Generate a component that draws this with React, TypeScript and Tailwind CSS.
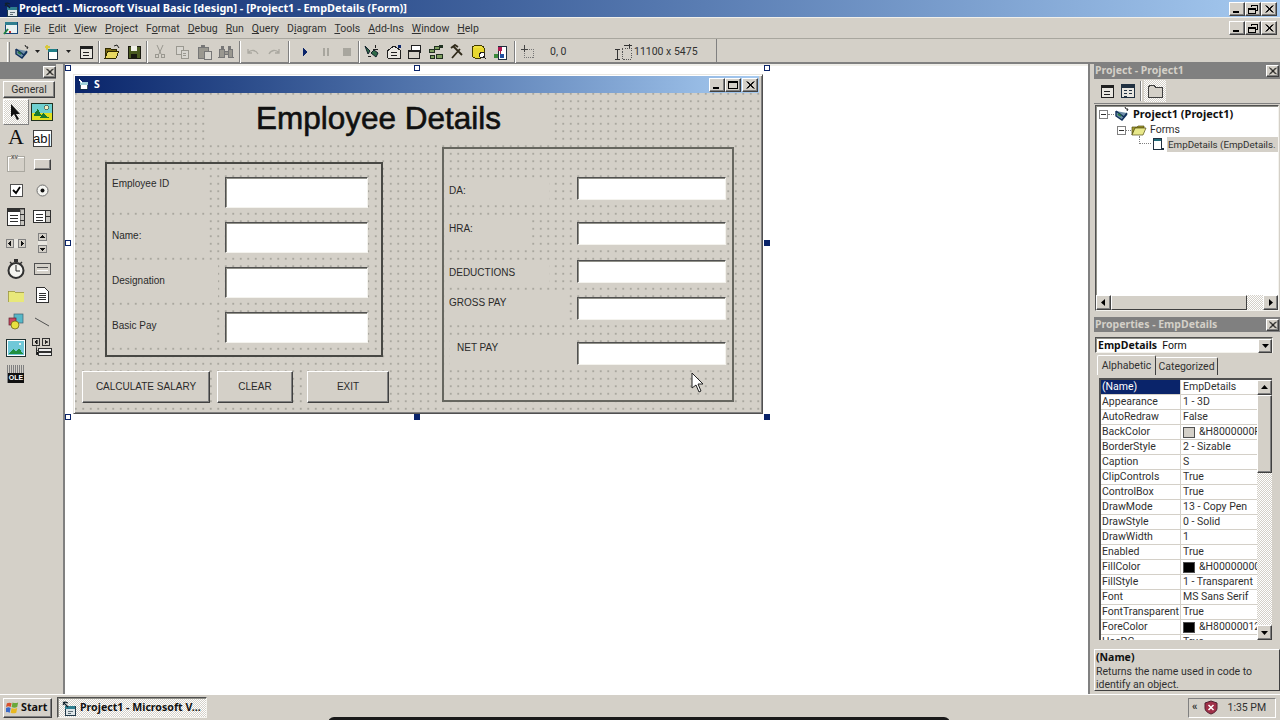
import React from "react";

const FONT = "font-['Roboto','Liberation_Sans',sans-serif]";
const BOLD = "font-['Noto_Sans','Liberation_Sans',sans-serif] font-bold";
const raised = "border border-t-white border-l-white border-r-[#404040] border-b-[#404040] shadow-[inset_-1px_-1px_0_#808080]";
const sunken = "border border-t-[#505050] border-l-[#505050] border-r-[#f4f3ee] border-b-[#f4f3ee] shadow-[inset_1px_1px_0_#909088]";
const dots = "bg-[#d4d0c8] bg-[radial-gradient(circle,#77776f_0.5px,transparent_0.8px)] bg-size-[7.5px_7.5px] bg-position-[-3px_-3px]";
const dither = "bg-[#d4d0c8] bg-[repeating-conic-gradient(#d4d0c8_0_25%,#ffffff_0_50%)] bg-size-[2px_2px]";

type P = { children: React.ReactNode; s?: number; c?: string };
const I = ({ children, s = 16, c = "" }: P) => (
  <svg width={s} height={s} viewBox="0 0 16 16" className={c} fill="none" shapeRendering="crispEdges">{children}</svg>
);

/* ---------- window buttons ---------- */
const Glyph = ({ k }: { k: string }) => (
  <svg width="12" height="10" viewBox="0 0 12 10" stroke="#000" fill="none" shapeRendering="crispEdges">
    {k === "min" && <rect x="2" y="7" width="6" height="2" fill="#000" stroke="none" />}
    {k === "max" && <path d="M1.500 1.500h9v7h-9zM1.500 2.500h9" />}
    {k === "res" && <path d="M4.500 2.500v-1h6v5h-2M1.500 4.500h7v5h-7zM1.500 5h7M4.500 1h6" />}
    {k === "x" && <path d="M2.500 1.500l7 7M3.500 1.500l7 7M9.500 1.500l-7 7M10.500 1.500l-7 7" shapeRendering="auto" strokeWidth="0.9" />}
  </svg>
);
const WinBtn = ({ k, c = "w-4 h-3.5" }: { k: string; c?: string }) => (
  <div className={`${c} bg-[#d4d0c8] ${raised} flex items-center justify-center`}><Glyph k={k} /></div>
);
const CloseBox = () => (
  <div className={`w-[13px] h-3 bg-[#d4d0c8] ${raised} flex items-center justify-center overflow-hidden`}><Glyph k="x" /></div>
);

/* ---------- app icons ---------- */
const VbIcon = () => (
  <I>
    <rect x="4" y="6" width="10" height="9" fill="#dfe6e8" stroke="#203848" />
    <rect x="4" y="6" width="10" height="3" fill="#2f7f90" />
    <path d="M2 2l5 5M2 5l2-3 3 1" stroke="#10202a" strokeWidth="1.300" shapeRendering="auto" />
    <path d="M7 11h5M7 13h3" stroke="#607078" />
  </I>
);
const MenuIcon = () => (
  <I>
    <rect x="2" y="2" width="12" height="11" fill="#eaf2f2" stroke="#184878" />
    <rect x="2" y="2" width="12" height="3" fill="#2f7f90" />
    <path d="M1 14l4-5" stroke="#208040" strokeWidth="2" shapeRendering="auto" />
    <circle cx="7" cy="12" r="1.500" fill="#c03030" />
  </I>
);
const ProjIcon = () => (
  <I>
    <path d="M2 5l8 6 3-4M2 5v5l6 4 5-6" stroke="#10305a" strokeWidth="1.400" fill="#6f8fa8" shapeRendering="auto" />
    <path d="M11 1l1 2 2 0-1 2" stroke="#202020" shapeRendering="auto" />
    <path d="M4 8l3 2" stroke="#2a7a40" strokeWidth="2" shapeRendering="auto" />
  </I>
);
const FormIcon = () => (
  <I>
    <rect x="4" y="5" width="9" height="10" fill="#fff" stroke="#203040" />
    <rect x="4" y="5" width="9" height="3" fill="#1f7f88" />
    <path d="M3 1v5M1 3h5" stroke="#d8c840" strokeWidth="1.500" />
  </I>
);
const MenuEd = () => (
  <I>
    <rect x="2" y="2" width="12" height="12" fill="#e8e6e0" stroke="#202020" />
    <rect x="2" y="2" width="12" height="3" fill="#202020" />
    <path d="M5 8h6M5 11h6" stroke="#202020" />
  </I>
);
const OpenIco = () => (
  <I>
    <path d="M1 4h5l1 1h5v2H4L1 14z" fill="#7a6a10" stroke="#302a00" />
    <path d="M1 14l3-7h11l-3 7z" fill="#e8d860" stroke="#302a00" />
    <path d="M10 2l3-1 2 3" stroke="#202020" shapeRendering="auto" />
  </I>
);
const SaveIco = () => (
  <I>
    <rect x="2" y="2" width="12" height="12" fill="#4a5a20" stroke="#1a1a10" />
    <rect x="5" y="2" width="6" height="5" fill="#f0f0e8" />
    <rect x="5" y="10" width="6" height="4" fill="#181810" />
  </I>
);
const g = "#9a9890";
const CutIco = () => <I><path d="M5 1l4 9M11 1L7 10" stroke={g} shapeRendering="auto" /><circle cx="5" cy="12" r="2" stroke={g} /><circle cx="11" cy="12" r="2" stroke={g} /></I>;
const CopyIco = () => <I><rect x="2" y="2" width="7" height="8" fill="#d8d6d0" stroke={g} /><rect x="7" y="6" width="7" height="8" fill="#d8d6d0" stroke={g} /><path d="M9 9h3M9 11h3" stroke={g} /></I>;
const PasteIco = () => <I><rect x="2" y="3" width="10" height="11" fill={g} stroke="#777" /><rect x="5" y="1" width="4" height="3" fill="#777" /><rect x="8" y="7" width="7" height="8" fill="#d8d6d0" stroke="#777" /></I>;
const FindIco = () => <I><path d="M2 5h4v8H1zM10 5h4l1 8h-5zM6 7h4v3H6z" fill={g} stroke="#777" /><rect x="3" y="2" width="3" height="3" fill="#777" /><rect x="10" y="2" width="3" height="3" fill="#777" /></I>;
const UndoIco = () => <I><path d="M3 5v4h4M3 9c3-4 8-3 10 1" stroke="#aaa8a0" strokeWidth="1.300" shapeRendering="auto" /></I>;
const RedoIco = () => <I><path d="M13 5v4H9M13 9C10 5 5 6 3 10" stroke="#aaa8a0" strokeWidth="1.300" shapeRendering="auto" /></I>;
const RunIco = () => <I><path d="M6 4l5 4-5 4z" fill="#0a246a" /></I>;
const PauseIco = () => <I><path d="M5 4h2v8H5zM9 4h2v8H9z" fill="#a8a69e" /></I>;
const StopIco = () => <I><rect x="4" y="4" width="8" height="8" fill="#a8a69e" /></I>;
const PExpIco = () => <I><path d="M1 2l5 5-2 3zM7 9l5 4 2-4-4-3z" fill="#2f6a48" stroke="#10202a" shapeRendering="auto" /><path d="M11 1v3M9 5h5M4 12h3" stroke="#202020" /></I>;
const PropIco = () => <I><path d="M1 7l7-5 6 4v8H2z" fill="#e8e6e0" stroke="#202020" /><path d="M5 8h6M5 11h6" stroke="#202020" /><rect x="12" y="1" width="3" height="3" fill="#0a246a" /></I>;
const LayoutIco = () => <I><rect x="4" y="1" width="9" height="7" fill="#fff" stroke="#202020" /><rect x="1" y="6" width="11" height="8" fill="#d4d0c8" stroke="#202020" /><rect x="1" y="6" width="11" height="2" fill="#202020" /></I>;
const ObjIco = () => <I><path d="M1 5h5v3H1zM6 2h5v3H6zM8 10h6v4H8zM2 11h4v3H2z" fill="#7fa060" stroke="#203020" /><rect x="11" y="1" width="4" height="3" fill="#203020" /></I>;
const ToolIco = () => <I><path d="M3 14l8-9M4 2l9 9M2 4l4-3 3 2" stroke="#302a1a" strokeWidth="1.800" shapeRendering="auto" /></I>;
const DataIco = () => <I><ellipse cx="7" cy="4" rx="6" ry="2.500" fill="#f0e040" stroke="#403a00" /><path d="M1 4v8c1 3 11 3 12 0V4" fill="#e8d830" stroke="#403a00" /><circle cx="11" cy="11" r="2.500" fill="#fff" stroke="#202020" /><path d="M13 13l2 2" stroke="#202020" /></I>;
const VcmIco = () => <I><rect x="6" y="2" width="8" height="13" fill="#fff" stroke="#203040" /><circle cx="8" cy="5" r="2.400" fill="#b01850" /><path d="M8 7v3" stroke="#a02040" /><circle cx="4" cy="12" r="2.200" fill="#3a8a3a" /><circle cx="10" cy="12" r="2.200" fill="#2050a0" /></I>;
const PosIco = () => <I><path d="M4.500 5.500h9v8h-9z" stroke="#777" strokeDasharray="1 1" /><path d="M4 1v7M1 5h7" stroke="#444" /></I>;
const SizeIco = () => <I s={18}><path d="M6.500 4.500h8v10h-8z" stroke="#555" strokeDasharray="1 1" /><path d="M8 2.500h7M13 1v3M2 6v9M0 6h4M0 15h4" stroke="#333" /></I>;

const Drop = () => <svg width="5" height="3" viewBox="0 0 5 3"><path d="M0 0h5L2.500 3z" fill="#202020" /></svg>;
const Sep = ({ w }: { w: number }) => (
  <div style={{ width: w }} className="h-[22px] flex justify-center shrink-0">
    <div className="w-[2px] h-[22px] border-l border-l-[#808080] border-r border-r-white" />
  </div>
);
const TB = ({ w = 22, children }: { w?: number; children: React.ReactNode }) => (
  <div style={{ width: w }} className="h-[22px] flex items-center justify-center shrink-0">{children}</div>
);

const menus: [string, string, string][] = [
  ["", "F", "ile"], ["", "E", "dit"], ["", "V", "iew"], ["", "P", "roject"], ["F", "o", "rmat"], ["", "D", "ebug"],
  ["", "R", "un"], ["", "Q", "uery"], ["D", "i", "agram"], ["", "T", "ools"], ["", "A", "dd-Ins"], ["", "W", "indow"], ["", "H", "elp"],
];

/* ---------- toolbox icons ---------- */
const PictureBox = ({ s = 22 }: { s?: number }) => (
  <svg width={s} height={s - 4} viewBox="0 0 20 16" shapeRendering="crispEdges">
    <rect x="0.5" y="0.5" width="19" height="15" fill="#6fd0d0" stroke="#203020" />
    <rect x="1" y="9" width="18" height="6" fill="#e0e020" />
    <path d="M2 12l4-7 4 7zM8 13l3-4 5 4z" fill="#1a7a30" />
    <circle cx="14" cy="4" r="2" fill="#f0f0c0" stroke="#202020" strokeWidth="0.5" />
  </svg>
);
const tools: React.ReactNode[] = [
  <svg width="14" height="18" viewBox="0 0 14 18"><path d="M2 1v13l3-3 3 6 2-1-3-5h4z" fill="#101010" /></svg>,
  <PictureBox />,
  <span className="font-['Liberation_Serif',serif] text-[22px] leading-none text-[#101010] -mt-[2px]">A</span>,
  <div className="w-[19px] h-[17px] bg-white border border-[#404040] flex items-center justify-center text-[13px] leading-none text-[#101010] font-['Liberation_Sans',sans-serif]">ab|</div>,
  <div className="w-[18px] h-[16px] border border-[#aaa8a0] shadow-[inset_1px_1px_0_#fff] relative"><span className="absolute -top-[3px] left-[3px] text-[7px] leading-none bg-[#d4d0c8] text-[#444]">xv</span></div>,
  <div className={`w-[17px] h-[11px] bg-[#d4d0c8] ${raised}`} />,
  <svg width="13" height="13" viewBox="0 0 13 13"><rect x="0.5" y="0.5" width="12" height="12" fill="#fff" stroke="#505050" /><path d="M3 6l3 3 4-6" stroke="#000" strokeWidth="1.800" fill="none" /></svg>,
  <svg width="13" height="13" viewBox="0 0 13 13"><circle cx="6.500" cy="6.500" r="5.500" fill="#f4f4f0" stroke="#707070" /><circle cx="6.500" cy="6.500" r="2" fill="#101010" /></svg>,
  <svg width="18" height="18" viewBox="0 0 18 18" shapeRendering="crispEdges"><rect x="0.5" y="0.5" width="17" height="17" fill="#fff" stroke="#303030" /><rect x="1" y="1" width="12" height="3" fill="#303030" /><rect x="13" y="1" width="4" height="16" fill="#c8c6c0" stroke="#303030" strokeWidth="0.5" /><path d="M3 7h8M3 10h8M3 13h8M13 6h4M13 12h4" stroke="#303030" /></svg>,
  <svg width="18" height="13" viewBox="0 0 18 13" shapeRendering="crispEdges"><rect x="0.5" y="0.5" width="17" height="12" fill="#fff" stroke="#303030" /><rect x="12" y="1" width="5" height="11" fill="#c8c6c0" /><path d="M3 4h7M3 7h7M3 10h7M12 6h5M12 .5v12" stroke="#303030" /></svg>,
  <svg width="20" height="9" viewBox="0 0 20 9" shapeRendering="crispEdges"><rect width="20" height="9" fill="#e8e6e0" /><rect x="0.5" y="0.5" width="7" height="8" fill="#d4d0c8" stroke="#808080" /><rect x="12.5" y="0.5" width="7" height="8" fill="#d4d0c8" stroke="#808080" /><path d="M5 2v5L2 4.500zM15 2v5l3-2.500z" fill="#101010" /></svg>,
  <svg width="9" height="20" viewBox="0 0 9 20" shapeRendering="crispEdges"><rect width="9" height="20" fill="#e8e6e0" /><rect x="0.5" y="0.5" width="8" height="7" fill="#d4d0c8" stroke="#808080" /><rect x="0.5" y="12.5" width="8" height="7" fill="#d4d0c8" stroke="#808080" /><path d="M2 5h5L4.500 2zM2 15h5l-2.500 3z" fill="#101010" /></svg>,
  <svg width="18" height="20" viewBox="0 0 18 20"><rect x="7" y="0" width="4" height="3" fill="#303030" /><path d="M3 3l2 2M15 3l-2 2" stroke="#303030" strokeWidth="1.500" /><circle cx="9" cy="11.500" r="7.500" fill="#f4f4f0" stroke="#303030" strokeWidth="2" /><path d="M9 6v6h4" stroke="#202020" fill="none" /></svg>,
  <svg width="17" height="12" viewBox="0 0 17 12" shapeRendering="crispEdges"><rect x="0.5" y="0.5" width="16" height="11" fill="#d4d0c8" stroke="#505050" /><path d="M3 4h11" stroke="#505050" /><rect x="3" y="7" width="11" height="1" fill="#fff" /></svg>,
  <svg width="16" height="13" viewBox="0 0 16 13" shapeRendering="crispEdges"><path d="M0 2h6l1 1h9v10H0z" fill="#e8e87a" stroke="#908a40" strokeWidth="0.7" /></svg>,
  <svg width="13" height="16" viewBox="0 0 13 16" shapeRendering="crispEdges"><path d="M.5.5h8l4 4v11H.5z" fill="#fff" stroke="#303030" /><path d="M3 6h7M3 8h7M3 10h7M3 12h7" stroke="#303030" /></svg>,
  <svg width="17" height="17" viewBox="0 0 17 17"><rect x="6" y="1" width="9" height="9" fill="#55b8c8" stroke="#406070" strokeWidth="0.7" /><rect x="1" y="5" width="7" height="7" fill="#c84860" stroke="#602030" strokeWidth="0.7" /><circle cx="7" cy="12" r="4" fill="#e8e040" stroke="#605810" strokeWidth="0.7" /></svg>,
  <svg width="16" height="10" viewBox="0 0 16 10"><path d="M1 1l14 8" stroke="#505050" /></svg>,
  <svg width="20" height="18" viewBox="0 0 20 18" shapeRendering="crispEdges"><rect x="0.5" y="0.5" width="19" height="17" fill="#fff" stroke="#203030" strokeWidth="1.500" /><rect x="2" y="2" width="16" height="14" fill="#70c8d8" /><path d="M3 15l4-5 3 3 3-4 4 6z" fill="#209040" /><circle cx="14" cy="5" r="1.600" fill="#e8f0f0" /></svg>,
  <svg width="20" height="19" viewBox="0 0 20 19" shapeRendering="crispEdges"><rect x="0.5" y="0.5" width="7" height="7" fill="#d4d0c8" stroke="#303030" /><rect x="10.5" y="0.5" width="7" height="7" fill="#d4d0c8" stroke="#303030" /><path d="M5 2v4L2.500 4zM13 2v4l2.500-2zM4 7.500v9h2M4 12.500h2" fill="#101010" stroke="#303030" strokeWidth="0.7" /><rect x="6.500" y="10.500" width="13" height="3" fill="#eee" stroke="#303030" /><rect x="6.500" y="14.500" width="13" height="3" fill="#eee" stroke="#303030" /></svg>,
  <div className="relative w-[18px] h-[18px] bg-[repeating-linear-gradient(90deg,#808080_0_1px,transparent_1px_2px)]"><span className="absolute left-[1px] bottom-0 w-[16px] h-[10px] bg-[#101010] text-white font-bold text-[7px] leading-[10px] text-center font-['Liberation_Sans',sans-serif]">OLE</span></div>,
];

/* ---------- form controls ---------- */
const TextBox = ({ c }: { c: string }) => <div className={`absolute bg-white ${sunken} ${c}`} />;
const Lbl = ({ c, children }: { c: string; children: React.ReactNode }) => (
  <div className={`absolute bg-[#d4d0c8] text-[10px] leading-[13px] text-[#2a2a2a] font-['Liberation_Sans',sans-serif] whitespace-nowrap ${c}`}>{children}</div>
);
const Btn = ({ c, children }: { c: string; children: React.ReactNode }) => (
  <div className={`absolute bg-[#d4d0c8] ${raised} flex items-center justify-center pb-[1px] text-[10px] text-[#2a2a2a] font-['Liberation_Sans',sans-serif] ${c}`}>{children}</div>
);
const Handle = ({ c, on }: { c: string; on?: boolean }) => (
  <div className={`absolute w-[6px] h-[6px] border border-[#0a246a] ${on ? "bg-[#0a246a]" : "bg-white"} ${c}`} />
);

const props: [string, string, string?][] = [
  ["Appearance", "1 - 3D"], ["AutoRedraw", "False"], ["BackColor", "&H8000000F&", "#d4d0c8"], ["BorderStyle", "2 - Sizable"],
  ["Caption", "S"], ["ClipControls", "True"], ["ControlBox", "True"], ["DrawMode", "13 - Copy Pen"], ["DrawStyle", "0 - Solid"],
  ["DrawWidth", "1"], ["Enabled", "True"], ["FillColor", "&H00000000&", "#000"], ["FillStyle", "1 - Transparent"], ["Font", "MS Sans Serif"],
  ["FontTransparent", "True"], ["ForeColor", "&H80000012&", "#000"], ["HasDC", "True"],
];

const Arrow = ({ d }: { d: "u" | "d" | "l" | "r" }) => (
  <svg width="7" height="7" viewBox="0 0 7 7">
    <path d={d === "u" ? "M0 5h7L3.500 1z" : d === "d" ? "M0 2h7L3.500 6z" : d === "l" ? "M5 0v7L1 3.500z" : "M2 0v7l4-3.500z"} fill="#000" />
  </svg>
);
const ScrollBtn = ({ d, c = "w-[15px] h-[15px]" }: { d: "u" | "d" | "l" | "r"; c?: string }) => (
  <div className={`${c} bg-[#d4d0c8] ${raised} flex items-center justify-center shrink-0`}><Arrow d={d} /></div>
);

export default function App() {
  return (
    <div className={`relative w-[1280px] h-[720px] overflow-hidden bg-[#d4d0c8] flex flex-col text-[#101010] text-[10.5px] ${FONT}`}>
      {/* Title bar */}
      <div className="h-[18px] shrink-0 bg-linear-to-r from-[#0a246a] to-[#a6caf0] flex items-center pl-[3px] pr-[3px] border-b border-b-[#f0efea]">
        <VbIcon />
        <div className={`text-white text-[10.9px] whitespace-nowrap flex-1 ${BOLD}`}>Project1 - Microsoft Visual Basic [design] - [Project1 - EmpDetails (Form)]</div>
        <WinBtn k="min" /><WinBtn k="res" /><WinBtn k="x" />
      </div>
      {/* Menu bar */}
      <div className="h-[20px] shrink-0 flex items-center pl-[3px] pr-[3px]">
        <div className="w-4 h-4 mr-[5px]"><MenuIcon /></div>
        <div className="flex-1 flex gap-[8px] pt-[2px] text-[#303030] text-[10.5px]">
          {menus.map(([a, b, c]) => <span key={b + c} className="whitespace-nowrap">{a}<span className="underline">{b}</span>{c}</span>)}
        </div>
        <WinBtn k="min" /><WinBtn k="res" /><WinBtn k="x" />
      </div>
      {/* Toolbar */}
      <div className="h-[26px] shrink-0 border-t border-t-[#a8a69e] border-b-2 border-b-[#808080] flex">
        <div className="w-[717px] shrink-0 flex items-center pl-[7px] pt-[2px] border-r border-r-[#808080]">
          <div className="w-[3px] h-[20px] border-l border-l-white border-r border-r-[#808080] mr-[3px]" />
          <TB w={18}><ProjIcon /></TB><TB w={12}><Drop /></TB><TB w={18}><FormIcon /></TB><TB w={14}><Drop /></TB>
          <TB><MenuEd /></TB><Sep w={4} />
          <TB><OpenIco /></TB><TB><SaveIco /></TB><Sep w={4} />
          <TB><CutIco /></TB><TB><CopyIco /></TB><TB><PasteIco /></TB><TB><FindIco /></TB><Sep w={5} />
          <TB w={21}><UndoIco /></TB><TB w={21}><RedoIco /></TB><Sep w={10} />
          <TB w={21}><RunIco /></TB><TB><PauseIco /></TB><TB w={20}><StopIco /></TB><Sep w={4} />
          <TB><PExpIco /></TB><TB w={21}><PropIco /></TB><TB><LayoutIco /></TB><TB w={20}><ObjIco /></TB><TB><ToolIco /></TB><TB w={21}><DataIco /></TB><TB><VcmIco /></TB>
          <Sep w={8} />
          <TB w={18}><PosIco /></TB>
          <span className="ml-[13px] w-[64px] text-[#303030]">0, 0</span>
          <TB w={20}><SizeIco /></TB>
          <span className="text-[#303030] whitespace-nowrap">11100 x 5475</span>
        </div>
      </div>

      {/* Body */}
      <div className="flex-1 min-h-0 flex">
        {/* Toolbox */}
        <div className="w-[65px] shrink-0 border-r-2 border-r-[#808080] flex flex-col pl-[2px]">
          <div className="h-[15px] w-[54px] -ml-[2px] pl-[2px] bg-[#808080] flex items-center justify-end box-content"><CloseBox /></div>
          <div className={`mt-[2px] ml-[1px] w-[52px] h-[17px] bg-[#d4d0c8] ${raised} flex items-center justify-center text-[#303030] text-[10.5px]`}>General</div>
          <div className="mt-[1px] ml-[1px] grid grid-cols-[26px_26px] auto-rows-[26.2px] place-items-center">
            {tools.map((t, i) => (
              <div key={i} className={`w-[26px] h-[26px] flex items-center justify-center ${i === 0 ? `${dither} border border-t-white border-l-white border-r-[#808080] border-b-[#808080]` : ""}`}>{t}</div>
            ))}
          </div>
        </div>

        {/* MDI design area */}
        <div className="relative w-[1023px] shrink-0 bg-white border-t-2 border-t-[#f0efea]">
          <div className="absolute left-[8px] top-[8px] w-[690px] h-[340px] bg-[#d4d0c8] border border-t-[#e8e6e0] border-l-[#e8e6e0] border-r-[#505050] border-b-[#505050] shadow-[inset_1px_1px_0_#fff,inset_-1px_-1px_0_#808080]">
            {/* caption */}
            <div className="absolute left-[1px] right-[3px] top-[1px] h-[17px] bg-linear-to-r from-[#0a246a] to-[#a6caf0] flex items-center pl-[3px] pr-[1px]">
              <I s={13}><rect x="3" y="5" width="9" height="9" fill="#fff" stroke="#103040" /><rect x="3" y="5" width="9" height="3" fill="#9fd0d8" /><path d="M1 2l4 3" stroke="#fff" strokeWidth="2" /></I>
              <span className={`ml-[3px] text-white text-[10.5px] flex-1 ${BOLD}`}>S</span>
              <WinBtn k="min" c="w-[16px] h-[14px]" /><WinBtn k="max" c="w-[16px] h-[14px] mr-[1px]" /><WinBtn k="x" c="w-[16px] h-[14px]" />
            </div>
            {/* client */}
            <div className={`absolute left-[1px] right-[1px] top-[18px] bottom-[1px] ${dots}`}>
              {/* heading */}
              <div className="absolute left-[130px] top-[4px] w-[348px] h-[48px] bg-[#d4d0c8] flex items-center pl-[51px] pb-[4px] text-[31.5px] leading-none text-[#101010] [-webkit-text-stroke:0.6px_#101010] font-['Liberation_Sans',sans-serif] whitespace-nowrap">Employee Details</div>

              {/* left frame */}
              <div className="absolute left-[30px] top-[69px] w-[278px] h-[195px] border-2 border-[#484844]" />
              <Lbl c="left-[35px] top-[81px] w-[98px] h-[36px] pl-[2px] pt-[3px]">Employee ID</Lbl>
              <TextBox c="left-[150px] top-[84px] w-[143px] h-[31px]" />
              <Lbl c="left-[35px] top-[127px] w-[98px] h-[35px] pl-[2px] pt-[9px]">Name:</Lbl>
              <TextBox c="left-[150px] top-[129px] w-[143px] h-[31px]" />
              <Lbl c="left-[35px] top-[172px] w-[108px] h-[35px] pl-[2px] pt-[9px]">Designation</Lbl>
              <TextBox c="left-[150px] top-[174px] w-[143px] h-[31px]" />
              <Lbl c="left-[35px] top-[217px] w-[106px] h-[35px] pl-[2px] pt-[9px]">Basic Pay</Lbl>
              <TextBox c="left-[150px] top-[219px] w-[143px] h-[31px]" />

              {/* buttons */}
              <Btn c="left-[7px] top-[278px] w-[128px] h-[32px]">CALCULATE SALARY</Btn>
              <Btn c="left-[142px] top-[278px] w-[76px] h-[32px]">CLEAR</Btn>
              <Btn c="left-[232px] top-[278px] w-[82px] h-[32px]">EXIT</Btn>

              {/* right frame */}
              <div className="absolute left-[367px] top-[54px] w-[292px] h-[255px] border-2 border-[#66665f]" />
              <Lbl c="left-[372px] top-[87px] w-[102px] h-[20px] pl-[2px] pt-[4px]">DA:</Lbl>
              <TextBox c="left-[502px] top-[84px] w-[149px] h-[23px]" />
              <Lbl c="left-[372px] top-[126px] w-[85px] h-[26px] pl-[2px] pt-[3px]">HRA:</Lbl>
              <TextBox c="left-[502px] top-[129px] w-[149px] h-[23px]" />
              <Lbl c="left-[372px] top-[171px] w-[102px] h-[20px] pl-[2px] pt-[2px]">DEDUCTIONS</Lbl>
              <TextBox c="left-[502px] top-[167px] w-[149px] h-[23px]" />
              <Lbl c="left-[372px] top-[200px] w-[118px] h-[29px] pl-[2px] pt-[3px]">GROSS PAY</Lbl>
              <TextBox c="left-[502px] top-[204px] w-[149px] h-[23px]" />
              <Lbl c="left-[375px] top-[246px] w-[122px] h-[27px] pl-[7px] pt-[2px]">NET PAY</Lbl>
              <TextBox c="left-[502px] top-[249px] w-[149px] h-[23px]" />
            </div>
          </div>
          {/* handles */}
          <Handle c="left-0 -top-[1px]" /><Handle c="left-[349px] -top-[1px]" /><Handle c="left-[699px] -top-[1px]" />
          <Handle c="left-0 top-[174px]" /><Handle c="left-[699px] top-[174px]" on />
          <Handle c="left-0 top-[348px]" /><Handle c="left-[349px] top-[348px]" on /><Handle c="left-[699px] top-[348px]" on />
        </div>

        {/* Right docks */}
        <div className="flex-1 min-w-0 flex flex-col pl-[4px] border-l-2 border-l-[#808080]">
          {/* Project */}
          <div className="h-[15px] pb-[1px] bg-[#808080] flex items-center justify-between pl-[1px] pr-[1px]">
            <span className={`text-[#d4d0c8] text-[10.5px] whitespace-nowrap ${BOLD}`}>Project - Project1</span><CloseBox />
          </div>
          <div className="h-[25px] flex items-center pl-[2px] border-b border-b-[#808080]">
            <TB w={21}><MenuEd /></TB><TB w={21}><svg width="14" height="14" viewBox="0 0 14 14" shapeRendering="crispEdges"><rect x="0.5" y="0.5" width="13" height="13" fill="#e8e6e0" stroke="#203040" /><rect x="1" y="1" width="12" height="3" fill="#203040" /><path d="M3 6h3M3 9h3M8 6h3M8 9h3M3 12h3" stroke="#203040" /></svg></TB>
            <div className="w-[2px] h-[20px] border-l border-l-[#808080] border-r border-r-white mx-[2px]" />
            <div className={`w-[22px] h-[22px] ${dither} flex items-center justify-center`}><svg width="15" height="13" viewBox="0 0 15 13" shapeRendering="crispEdges"><path d="M.5 2.500l1-2h5l1 2h7v10H.5z" fill="#d4d0c8" stroke="#404040" /></svg></div>
          </div>
          <div className={`h-[206px] mt-[1px] ml-[1px] mr-[1px] bg-white ${sunken} flex flex-col overflow-hidden`}>
            <div className="flex-1 relative">
              {/* tree nodes lie on their own free indent */}
              <div className="absolute left-[3px] top-0 flex items-center h-[16px]">
                <span className="w-[9px] h-[9px] border border-[#808080] flex items-center justify-center"><span className="w-[5px] h-[1px] bg-[#303030]" /></span>
                <span className="w-[6px] h-0 border-t border-dotted border-[#808080]" />
                <ProjIcon /><span className={`ml-[3px] text-[11px] whitespace-nowrap ${BOLD}`}>Project1 (Project1)</span>
              </div>
              <div className="absolute left-[21px] top-[16px] flex items-center h-[16px]">
                <span className="w-[9px] h-[9px] border border-[#808080] flex items-center justify-center"><span className="w-[5px] h-[1px] bg-[#303030]" /></span>
                <span className="w-[5px] h-0 border-t border-dotted border-[#808080]" />
                <svg width="16" height="12" viewBox="0 0 16 12"><path d="M1 3h5l1-1h6v2H4L1 11z" fill="#a8a030" stroke="#504a10" strokeWidth="0.7" /><path d="M1 11l3-7h11l-3 7z" fill="#e8e88a" stroke="#504a10" strokeWidth="0.7" /></svg>
                <span className="ml-[3px] whitespace-nowrap text-[#303030]">Forms</span>
              </div>
              <div className="absolute left-[43px] top-[30px] right-0 flex items-center h-[16px]">
                <span className="w-[12px] h-[8px] border-l border-b border-dotted border-[#808080] -mt-[8px]" />
                <svg width="14" height="14" viewBox="0 0 14 14" shapeRendering="crispEdges"><path d="M2.500 1.500h8v10h2v1h-10z" fill="#fff" stroke="#203040" /><rect x="3" y="2" width="7" height="2" fill="#1f6a78" /></svg>
                <span className="ml-[2px] flex-1 bg-[#d4d0c8] text-[#303030] text-[9.8px] whitespace-nowrap h-[15px] leading-[15px] overflow-hidden pl-[1px]">EmpDetails (EmpDetails.</span>
              </div>
            </div>
            <div className="h-[15px] flex shrink-0">
              <ScrollBtn d="l" />
              <div className="w-[136px] bg-[#d4d0c8] border border-t-white border-l-white border-r-[#404040] border-b-[#404040]" />
              <div className={`flex-1 ${dither}`} />
              <ScrollBtn d="r" />
            </div>
          </div>

          {/* Properties */}
          <div className="mt-[6px] h-[15px] bg-[#808080] flex items-center justify-between pl-[1px] pr-[1px]">
            <span className={`text-[#d4d0c8] text-[10.5px] whitespace-nowrap ${BOLD}`}>Properties - EmpDetails</span><CloseBox />
          </div>
          <div className={`mt-[5px] ml-[1px] mr-[7px] h-[16px] bg-white ${sunken} flex items-center justify-between pl-[2px] pt-[1px]`}>
            <span className="whitespace-nowrap"><b className={BOLD}>EmpDetails</b>&nbsp;&nbsp;Form</span>
            <ScrollBtn d="d" c="w-[14px] h-[14px]" />
          </div>
          <div className="mt-[3px] h-[19px] flex items-end pl-[3px] relative z-10">
            <div className="w-[59px] h-[20px] bg-[#d4d0c8] border border-t-white border-l-white border-r-[#404040] border-b-0 rounded-t-[2px] flex items-center justify-center text-[#303030]">Alphabetic</div>
            <div className="w-[62px] h-[18px] border border-t-white border-l-0 border-r-[#404040] border-b-0 rounded-tr-[2px] flex items-center justify-center text-[#303030]">Categorized</div>
          </div>
          <div className="ml-[5px] mr-[8px] mt-[3px] h-[262px] border-t-2 border-l-2 border-t-[#505050] border-l-[#505050] flex overflow-hidden">
            <div className="flex-1 min-w-0 bg-white">
              <div className="h-[15px] flex border-b border-b-[#d4d0c8]">
                <div className="w-[79px] bg-[#0a246a] text-white pl-[1px] leading-[14px]">(Name)</div>
                <div className="flex-1 pl-[2px] leading-[14px] border-l border-l-[#d4d0c8] whitespace-nowrap overflow-hidden text-[#303030]">EmpDetails</div>
              </div>
              {props.map(([n, v, sw]) => (
                <div key={n} className="h-[15px] flex border-b border-b-[#d4d0c8] text-[#303030]">
                  <div className="w-[79px] shrink-0 pl-[1px] leading-[14px] whitespace-nowrap overflow-hidden">{n}</div>
                  <div className="flex-1 min-w-0 pl-[2px] leading-[14px] border-l border-l-[#d4d0c8] whitespace-nowrap overflow-hidden flex items-center">
                    {sw && <span style={{ background: sw }} className="w-[12px] h-[11px] border border-[#505050] mr-[4px] shrink-0" />}
                    <span>{v}</span>
                  </div>
                </div>
              ))}
            </div>
            <div className="w-[15px] shrink-0 flex flex-col">
              <ScrollBtn d="u" />
              <div className={`h-[78px] bg-[#d4d0c8] ${raised}`} />
              <div className={`flex-1 ${dither}`} />
              <ScrollBtn d="d" />
            </div>
          </div>
          <div className="mt-[9px] h-[42px] border border-t-white border-l-white border-r-[#404040] border-b-[#404040] px-[1px] text-[10.5px] leading-[13px] text-[#303030]">
            <div className={`mt-[1px] mb-[1px] text-[#101010] ${BOLD}`}>(Name)</div>
            <div className="whitespace-nowrap">Returns the name used in code to</div>
            <div className="whitespace-nowrap">identify an object.</div>
          </div>
        </div>
      </div>

      {/* Taskbar */}
      <div className="h-[26px] shrink-0 border-t border-t-white flex items-center pl-[3px] pr-[4px]">
        <div className={`w-[49px] h-[20px] bg-[#d4d0c8] ${raised} flex items-center pl-[2px] text-[10.7px] ${BOLD}`}>
          <svg width="14" height="14" viewBox="0 0 15 14"><path d="M1 2c2-1 3-1 5 0L5 6C3 5 2 5 0 6z" fill="#d8502a" /><path d="M7 1c2 1 4 1 6 0l-1 5c-2 1-4 1-6 0z" fill="#6aa83a" /><path d="M0 7c2-1 3-1 5 0l-1 5c-2-1-3-1-5 0z" fill="#3a6ac8" /><path d="M6 7c2 1 4 1 6 0l-1 5c-2 1-4 1-6 0z" fill="#e8b820" /></svg>
          <span className="ml-[1px]">Start</span>
        </div>
        <div className={`ml-[5px] w-[150px] h-[21px] ${dither} ${sunken} flex items-center pl-[3px] text-[10.6px] whitespace-nowrap overflow-hidden ${BOLD}`}>
          <VbIcon /><span className="ml-[3px]">Project1 - Microsoft V...</span>
        </div>
        <div className="ml-auto w-[88px] h-[20px] border border-t-[#808080] border-l-[#808080] border-r-white border-b-white flex items-center pl-[3px] text-[#303030]">
          <span className="font-bold text-[11px] mr-[6px]">«</span>
          <svg width="14" height="15" viewBox="0 0 14 15"><path d="M7 1l6 2v5c0 3-3 5-6 6-3-1-6-3-6-6V3z" fill="#a03048" stroke="#502030" /><path d="M4.500 5l5 5M9.500 5l-5 5" stroke="#fff" strokeWidth="1.500" /></svg>
          <span className="ml-[10px] whitespace-nowrap">1:35 PM</span>
        </div>
      </div>

      {/* mouse pointer and the video player's edge lie over the page */}
      <svg className="absolute left-[691px] top-[372px]" width="14" height="21" viewBox="0 0 14 21">
        <path d="M1 1v15l4-3 3 7 2-1-3-7h5z" fill="#fff" stroke="#202020" />
      </svg>
      <div className="absolute left-[328px] top-[717px] w-[622px] h-[6px] rounded-t-[6px] bg-[#1a1a1a]" />
    </div>
  );
}
